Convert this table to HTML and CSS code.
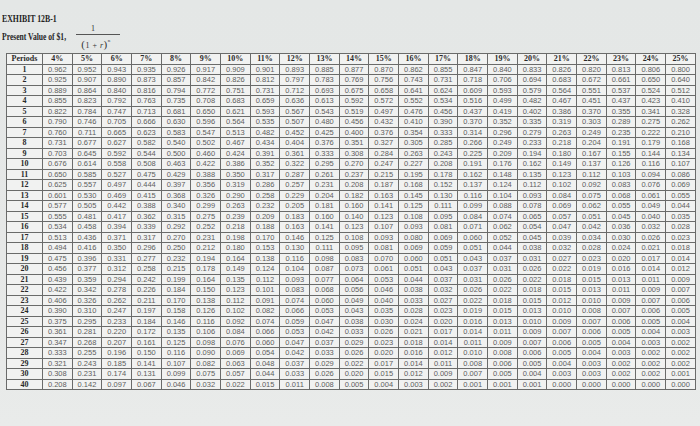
FILE: index.html
```html
<!DOCTYPE html>
<html>
<head>
<meta charset="utf-8">
<title>Exhibit 12B-1</title>
<link rel="stylesheet" href="styles.css">
</head>
<body>
<div class="page">
  <div class="title">EXHIBIT 12B-1</div>
  <div class="subtitle">
    <span class="label">Present Value of $1,</span>
    <span class="frac">
      <span class="num">1</span>
      <span class="den"><span class="paren">(</span>1 + <i>r</i><span class="paren">)</span><sup>n</sup></span>
    </span>
  </div>
  <table class="pv">
    <thead><tr id="head"><th class="per">Periods</th></tr></thead>
    <tbody id="body"></tbody>
  </table>
</div>
<script src="script.js"></script>
</body>
</html>
```

FILE: styles.css
```css
html, body {
  margin: 0;
  padding: 0;
}
body {
  width: 700px;
  height: 426px;
  overflow: hidden;
  background: linear-gradient(180deg, #e4e7e6 0%, #e6e8e7 60%, #e9ebea 100%);
  font-family: "Liberation Serif", serif;
  color: #2b2b2b;
}
.page {
  padding: 8px 0 0 2px;
}
.title {
  font-weight: bold;
  font-size: 10px;
  line-height: 11px;
  display: inline-block;
  transform: scaleX(0.78);
  transform-origin: left center;
  color: #222;
}
.subtitle {
  display: flex;
  align-items: center;
  height: 22px;
}
.label {
  font-weight: bold;
  font-size: 9.5px;
  display: inline-block;
  transform: scaleX(0.8);
  transform-origin: left center;
  width: 62px;
  white-space: nowrap;
  color: #262626;
}
.frac {
  display: inline-flex;
  flex-direction: column;
  align-items: center;
  margin-left: 12px;
  font-size: 8px;
  color: #333;
}
.num {
  font-size: 8px;
  line-height: 9px;
  padding: 0 10px 1px 0;
  border-bottom: 1px solid #555;
  width: 34px;
  text-align: center;
}
.den {
  font-size: 8px;
  line-height: 11px;
  letter-spacing: 0.5px;
  padding-right: 4px;
}
.paren {
  font-size: 11px;
}
.den sup {
  font-size: 5px;
  vertical-align: 6px;
}
.pv {
  margin-top: 5px;
  margin-left: 4px;
  border-collapse: collapse;
  table-layout: fixed;
  width: 690px;
  background: #f1f2f1;
}
.pv th, .pv td {
  border: 1px solid #6a6b6a;
  padding: 0;
  height: 9.5px;
  line-height: 9px;
  text-align: center;
  white-space: nowrap;
  overflow: hidden;
}
.pv th {
  font-family: "Liberation Serif", serif;
  font-weight: bold;
  font-size: 8px;
  color: #2a2a2a;
}
.pv th.per {
  width: 35px;
}
.pv td {
  font-family: "Liberation Sans", sans-serif;
  font-size: 7.5px;
  color: #5e5e5e;
}
.pv td.p {
  font-family: "Liberation Serif", serif;
  font-weight: bold;
  font-size: 8px;
  color: #2a2a2a;
}
```

FILE: script.js
```js
(function () {
  var rates = [4,5,6,7,8,9,10,11,12,13,14,15,16,17,18,19,20,21,22,23,24,25];
  var periods = [];
  for (var i = 1; i <= 30; i++) periods.push(i);
  periods.push(40);
  var head = document.getElementById('head');
  rates.forEach(function (r) {
    var th = document.createElement('th');
    th.textContent = r + '%';
    head.appendChild(th);
  });
  var body = document.getElementById('body');
  periods.forEach(function (n) {
    var tr = document.createElement('tr');
    var p = document.createElement('td');
    p.className = 'p';
    p.textContent = n;
    tr.appendChild(p);
    rates.forEach(function (r) {
      var td = document.createElement('td');
      td.textContent = Math.pow(1 + r / 100, -n).toFixed(3);
      tr.appendChild(td);
    });
    body.appendChild(tr);
  });
})();
```
